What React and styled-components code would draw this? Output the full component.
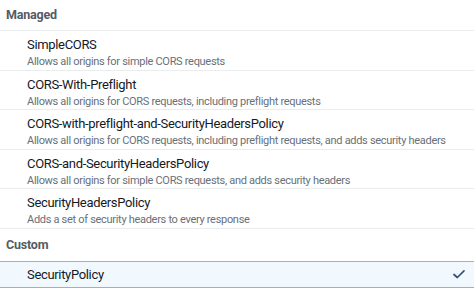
import React from 'react';
import styled, { createGlobalStyle } from 'styled-components';

const GlobalStyle = createGlobalStyle`
	html, body {
		margin: 0;
		padding: 0;
		background: #ffffff;
	}
	body {
		font-family: Roboto, 'Noto Sans', Arial, sans-serif;
		-webkit-font-smoothing: antialiased;
	}
`;

const managed = [
	{ title: 'SimpleCORS', desc: 'Allows all origins for simple CORS requests' },
	{
		title: 'CORS-With-Preflight',
		desc: 'Allows all origins for CORS requests, including preflight requests',
	},
	{
		title: 'CORS-with-preflight-and-SecurityHeadersPolicy',
		desc: 'Allows all origins for CORS requests, including preflight requests, and adds security headers',
	},
	{
		title: 'CORS-and-SecurityHeadersPolicy',
		desc: 'Allows all origins for simple CORS requests, and adds security headers',
	},
	{
		title: 'SecurityHeadersPolicy',
		desc: 'Adds a set of security headers to every response',
	},
];

const Check = () => (
	<svg width="14" height="14" viewBox="0 0 14 14" fill="none">
		<path
			d="M2 7.5 L5.3 10.5 L12 3.8"
			stroke="#36507a"
			strokeWidth="1.7"
			strokeLinecap="round"
			strokeLinejoin="round"
		/>
	</svg>
);

export default function App() {
	return (
		<>
			<GlobalStyle />
			<List>
				<GroupLabel $height={31}>Managed</GroupLabel>
				{managed.map((item) => (
					<Option key={item.title}>
						<Title>{item.title}</Title>
						<Desc>{item.desc}</Desc>
					</Option>
				))}
				<GroupLabel $height={33}>Custom</GroupLabel>
				<Option $selected>
					<Title>SecurityPolicy</Title>
					<CheckMark>
						<Check />
					</CheckMark>
				</Option>
			</List>
		</>
	);
}

const List = styled.div`
	width: 474px;
	height: 292px;
	overflow: hidden;
	display: flex;
	flex-direction: column;
	background: #fff;
`;

const GroupLabel = styled.div`
	flex: none;
	height: ${(p) => p.$height}px;
	box-sizing: border-box;
	display: flex;
	align-items: center;
	padding: 0 6px 1px;
	font-size: 12.5px;
	letter-spacing: -0.2px;
	font-weight: 700;
	color: #545b64;
	border-bottom: 1px solid #eaeded;
`;

const Option = styled.div`
	flex: none;
	position: relative;
	box-sizing: border-box;
	height: ${(p) => (p.$selected ? 27 : 39.5)}px;
	padding: ${(p) => (p.$selected ? '0 27px' : '5px 27px 0')};
	display: flex;
	flex-direction: column;
	justify-content: ${(p) => (p.$selected ? 'center' : 'flex-start')};
	border-bottom: 1px solid ${(p) => (p.$selected ? '#a6afb7' : '#eaeded')};
	background: ${(p) => (p.$selected ? '#f1f9ff' : '#fff')};
	${(p) => p.$selected && 'border-top: 1px solid #a6afb7; margin-top: -1px;'}
`;

const Title = styled.div`
	font-size: 13px;
	letter-spacing: -0.33px;
	line-height: 17px;
	color: #16191f;
	white-space: nowrap;
`;

const Desc = styled.div`
	font-size: 11px;
	letter-spacing: -0.3px;
	line-height: 15px;
	margin-top: 1px;
	color: #687078;
	white-space: nowrap;
`;

const CheckMark = styled.span`
	position: absolute;
	right: 8px;
	top: 50%;
	transform: translateY(-50%);
	display: flex;
`;
